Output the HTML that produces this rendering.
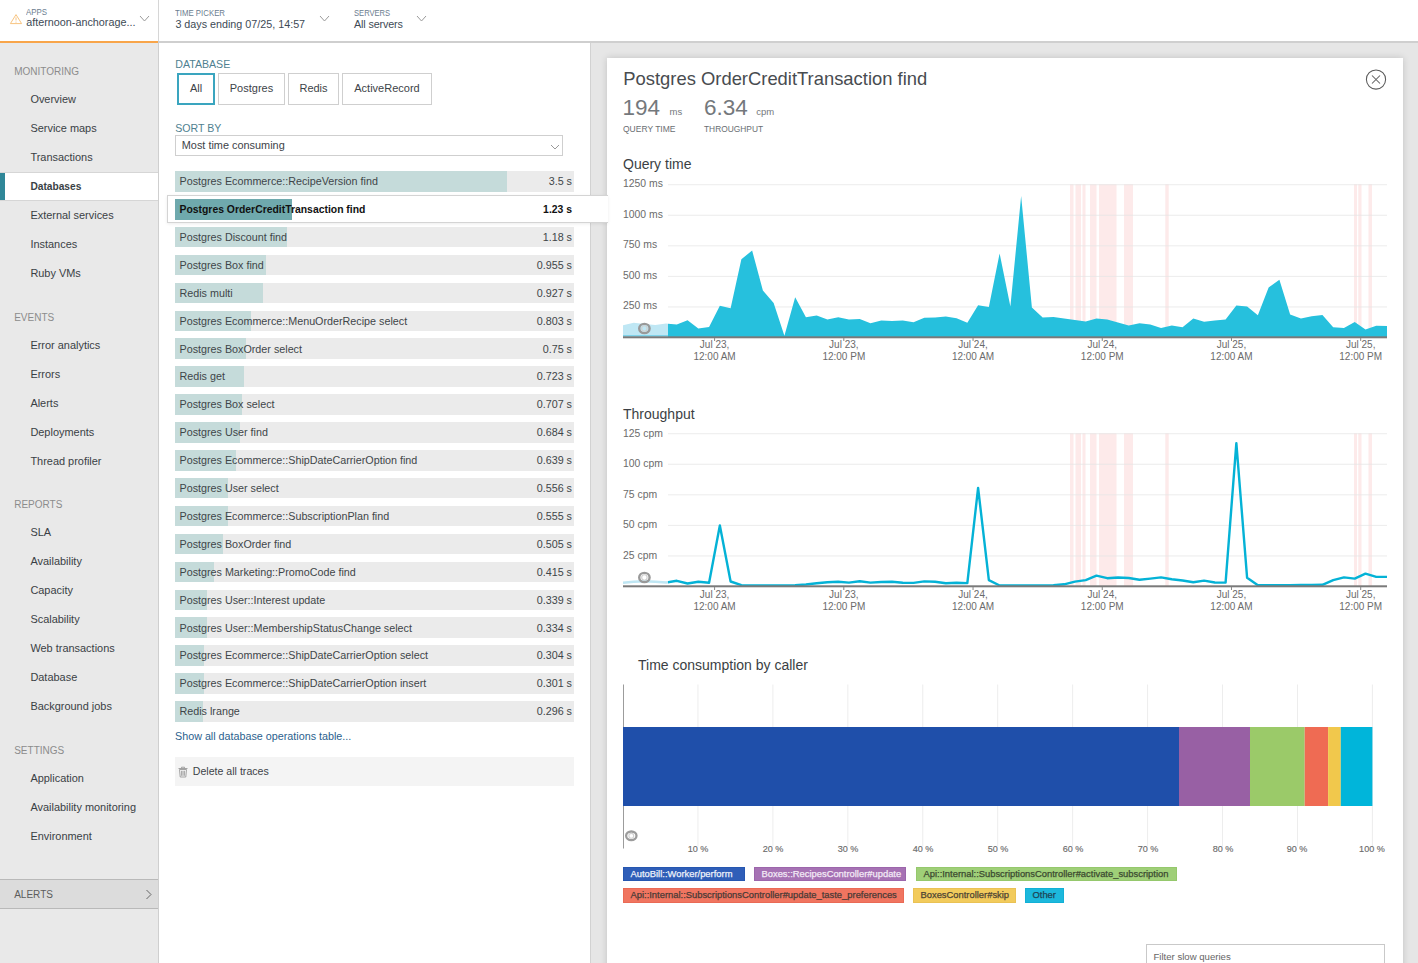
<!DOCTYPE html>
<html><head><meta charset="utf-8"><title>Databases</title>
<style>
html,body{margin:0;padding:0;width:1418px;height:963px;overflow:hidden;background:#fff;}
body{position:relative;font-family:"Liberation Sans", sans-serif;}
.t{position:absolute;line-height:1;white-space:nowrap;font-family:"Liberation Sans", sans-serif;}
.r{position:absolute;display:block;}
</style></head><body>
<div class="r" style="left:0px;top:0px;width:1418px;height:41px;background:#fff;"></div>
<div class="r" style="left:0px;top:41px;width:158px;height:2px;background:#f8a54a;"></div>
<div class="r" style="left:158px;top:41px;width:1260px;height:2px;background:#cfcfcf;"></div>
<div class="r" style="left:158px;top:0px;width:1px;height:41px;background:#d6d6d6;"></div>
<div class="r" style="left:0px;top:43px;width:158px;height:920px;background:#e9e9e9;"></div>
<div class="r" style="left:158px;top:43px;width:1px;height:920px;background:#cfcfcf;"></div>
<div class="r" style="left:159px;top:43px;width:431px;height:920px;background:#fff;"></div>
<div class="r" style="left:590px;top:43px;width:828px;height:920px;background:#e6e6e6;"></div>
<div class="r" style="left:590px;top:43px;width:1px;height:920px;background:#d2d2d2;"></div>
<div class="r" style="left:591px;top:43px;width:827px;height:920px;overflow:hidden;"><div class="r" style="left:16px;top:15px;width:796px;height:940px;background:#fff;box-shadow:0 0 7px rgba(0,0,0,0.16);"></div></div>
<svg class="r" style="left:9px;top:13px" width="14" height="12" viewBox="0 0 14 12"><path d="M7 1.6 L12.6 10.6 L1.4 10.6 Z" fill="none" stroke="#f8c480" stroke-width="1" stroke-linejoin="round"/><path d="M7 4.4 V7.5" stroke="#f8c480" stroke-width="1"/><circle cx="7" cy="9.1" r="0.55" fill="#f8c480"/></svg>
<div class="t" style="left:26.20px;top:8.08px;font-size:9.2px;color:#6b7d8f;transform:scaleX(0.86);transform-origin:0 0;">APPS</div>
<div class="t" style="left:26.20px;top:16.52px;font-size:10.8px;color:#3d4a55;">afternoon-anchorage...</div>
<svg class="r" style="left:139px;top:15px" width="11" height="7" viewBox="0 0 11 7"><path d="M1 1 L5.5 6 L10 1" fill="none" stroke="#9a9a9a" stroke-width="1"/></svg>
<div class="t" style="left:175.40px;top:7.91px;font-size:9.4px;color:#6b7d8f;transform:scaleX(0.835);transform-origin:0 0;">TIME PICKER</div>
<div class="t" style="left:175.40px;top:19.06px;font-size:10.75px;color:#3d4a55;">3 days ending 07/25, 14:57</div>
<svg class="r" style="left:319px;top:15px" width="11" height="7" viewBox="0 0 11 7"><path d="M1 1 L5.5 6 L10 1" fill="none" stroke="#9a9a9a" stroke-width="1"/></svg>
<div class="t" style="left:354.10px;top:7.91px;font-size:9.4px;color:#6b7d8f;transform:scaleX(0.81);transform-origin:0 0;">SERVERS</div>
<div class="t" style="left:354.10px;top:19.06px;font-size:10.75px;color:#3d4a55;letter-spacing:-0.15px;">All servers</div>
<svg class="r" style="left:415.5px;top:15px" width="11" height="7" viewBox="0 0 11 7"><path d="M1 1 L5.5 6 L10 1" fill="none" stroke="#9a9a9a" stroke-width="1"/></svg>
<div class="r" style="left:0px;top:172px;width:158px;height:1px;background:#d6d6d6;"></div>
<div class="r" style="left:0px;top:173px;width:158px;height:27px;background:#fff;"></div>
<div class="r" style="left:0px;top:200px;width:158px;height:1px;background:#d6d6d6;"></div>
<div class="r" style="left:0px;top:173px;width:5px;height:27px;background:#2f8798;"></div>
<div class="t" style="left:14.20px;top:66.50px;font-size:10.0px;color:#8c8c8c;">MONITORING</div>
<div class="t" style="left:30.40px;top:93.69px;font-size:10.95px;color:#3a3f45;">Overview</div>
<div class="t" style="left:30.40px;top:122.69px;font-size:10.95px;color:#3a3f45;">Service maps</div>
<div class="t" style="left:30.40px;top:151.69px;font-size:10.95px;color:#3a3f45;">Transactions</div>
<div class="t" style="left:30.40px;top:182.13px;font-size:10.2px;color:#3a3f45;font-weight:bold;">Databases</div>
<div class="t" style="left:30.40px;top:210.09px;font-size:10.95px;color:#3a3f45;">External services</div>
<div class="t" style="left:30.40px;top:238.89px;font-size:10.95px;color:#3a3f45;">Instances</div>
<div class="t" style="left:30.40px;top:267.69px;font-size:10.95px;color:#3a3f45;">Ruby VMs</div>
<div class="t" style="left:14.20px;top:312.50px;font-size:10.0px;color:#8c8c8c;">EVENTS</div>
<div class="t" style="left:30.40px;top:339.69px;font-size:10.95px;color:#3a3f45;">Error analytics</div>
<div class="t" style="left:30.40px;top:368.69px;font-size:10.95px;color:#3a3f45;">Errors</div>
<div class="t" style="left:30.40px;top:397.69px;font-size:10.95px;color:#3a3f45;">Alerts</div>
<div class="t" style="left:30.40px;top:426.69px;font-size:10.95px;color:#3a3f45;">Deployments</div>
<div class="t" style="left:30.40px;top:455.69px;font-size:10.95px;color:#3a3f45;">Thread profiler</div>
<div class="t" style="left:14.20px;top:499.50px;font-size:10.0px;color:#8c8c8c;">REPORTS</div>
<div class="t" style="left:30.40px;top:526.69px;font-size:10.95px;color:#3a3f45;">SLA</div>
<div class="t" style="left:30.40px;top:555.69px;font-size:10.95px;color:#3a3f45;">Availability</div>
<div class="t" style="left:30.40px;top:584.69px;font-size:10.95px;color:#3a3f45;">Capacity</div>
<div class="t" style="left:30.40px;top:613.69px;font-size:10.95px;color:#3a3f45;">Scalability</div>
<div class="t" style="left:30.40px;top:642.69px;font-size:10.95px;color:#3a3f45;">Web transactions</div>
<div class="t" style="left:30.40px;top:671.69px;font-size:10.95px;color:#3a3f45;">Database</div>
<div class="t" style="left:30.40px;top:700.69px;font-size:10.95px;color:#3a3f45;">Background jobs</div>
<div class="t" style="left:14.20px;top:745.50px;font-size:10.0px;color:#8c8c8c;">SETTINGS</div>
<div class="t" style="left:30.40px;top:772.99px;font-size:10.95px;color:#3a3f45;">Application</div>
<div class="t" style="left:30.40px;top:801.69px;font-size:10.95px;color:#3a3f45;">Availability monitoring</div>
<div class="t" style="left:30.40px;top:830.69px;font-size:10.95px;color:#3a3f45;">Environment</div>
<div class="r" style="left:0px;top:879px;width:158px;height:1px;background:#b9b9b9;"></div>
<div class="r" style="left:0px;top:880px;width:158px;height:28px;background:#dcdcdc;"></div>
<div class="r" style="left:0px;top:908px;width:158px;height:1px;background:#b9b9b9;"></div>
<div class="t" style="left:14.20px;top:889.50px;font-size:10.0px;color:#5d5d5d;">ALERTS</div>
<svg class="r" style="left:145px;top:889px" width="8" height="11" viewBox="0 0 8 11"><path d="M1.5 1 L6 5.5 L1.5 10" fill="none" stroke="#666" stroke-width="1"/></svg>
<div class="t" style="left:175.30px;top:59.19px;font-size:10.6px;color:#4f7f90;">DATABASE</div>
<div class="r" style="left:177px;top:73px;width:34px;height:28px;border:2px solid #3aa5bf;background:#fff"></div>
<div class="t" style="left:96.00px;width:200px;text-align:center;top:83.15px;font-size:11px;color:#3d4348;">All</div>
<div class="r" style="left:218px;top:73px;width:65px;height:30px;border:1px solid #cfcfcf;background:#fff"></div>
<div class="t" style="left:151.50px;width:200px;text-align:center;top:83.15px;font-size:11px;color:#3d4348;">Postgres</div>
<div class="r" style="left:288px;top:73px;width:49px;height:30px;border:1px solid #cfcfcf;background:#fff"></div>
<div class="t" style="left:213.50px;width:200px;text-align:center;top:83.15px;font-size:11px;color:#3d4348;">Redis</div>
<div class="r" style="left:342px;top:73px;width:88px;height:30px;border:1px solid #cfcfcf;background:#fff"></div>
<div class="t" style="left:287.00px;width:200px;text-align:center;top:83.15px;font-size:11px;color:#3d4348;">ActiveRecord</div>
<div class="t" style="left:175.30px;top:122.99px;font-size:10.6px;color:#4f7f90;">SORT BY</div>
<div class="r" style="left:175px;top:135px;width:386px;height:19px;border:1px solid #cfcfcf;background:#fff"></div>
<div class="t" style="left:181.80px;top:139.83px;font-size:10.9px;color:#3d4348;">Most time consuming</div>
<svg class="r" style="left:549.5px;top:143.5px" width="10" height="6" viewBox="0 0 10 6"><path d="M1 1 L5.0 5 L9 1" fill="none" stroke="#999" stroke-width="1"/></svg>
<div class="r" style="left:175px;top:171.0px;width:399px;height:20.5px;background:#ebebeb"></div>
<div class="r" style="left:175px;top:171.0px;width:332.0px;height:20.5px;background:#c5dbda"></div>
<div class="t" style="left:179.50px;top:176.16px;font-size:10.75px;color:#3f4649;">Postgres Ecommerce::RecipeVersion find</div>
<div class="t" style="left:172.00px;width:400px;text-align:right;top:176.16px;font-size:10.75px;color:#3f4649;">3.5 s</div>
<div class="r" style="left:167px;top:195px;width:440px;height:26px;border:1px solid #d4d4d4;border-right:none;background:#fff;box-shadow:0 1px 3px rgba(0,0,0,0.08)"></div>
<div class="r" style="left:175px;top:199px;width:117px;height:21px;background:#6fa9ad;"></div>
<div class="t" style="left:179.50px;top:205.16px;font-size:10.4px;color:#111;font-weight:bold;">Postgres OrderCreditTransaction find</div>
<div class="t" style="left:172.00px;width:400px;text-align:right;top:205.16px;font-size:10.4px;color:#111;font-weight:bold;">1.23 s</div>
<div class="r" style="left:175px;top:226.8px;width:399px;height:20.5px;background:#ebebeb"></div>
<div class="r" style="left:175px;top:226.8px;width:111.9px;height:20.5px;background:#c5dbda"></div>
<div class="t" style="left:179.50px;top:231.96px;font-size:10.75px;color:#3f4649;">Postgres Discount find</div>
<div class="t" style="left:172.00px;width:400px;text-align:right;top:231.96px;font-size:10.75px;color:#3f4649;">1.18 s</div>
<div class="r" style="left:175px;top:254.7px;width:399px;height:20.5px;background:#ebebeb"></div>
<div class="r" style="left:175px;top:254.7px;width:90.6px;height:20.5px;background:#c5dbda"></div>
<div class="t" style="left:179.50px;top:259.86px;font-size:10.75px;color:#3f4649;">Postgres Box find</div>
<div class="t" style="left:172.00px;width:400px;text-align:right;top:259.86px;font-size:10.75px;color:#3f4649;">0.955 s</div>
<div class="r" style="left:175px;top:282.6px;width:399px;height:20.5px;background:#ebebeb"></div>
<div class="r" style="left:175px;top:282.6px;width:87.9px;height:20.5px;background:#c5dbda"></div>
<div class="t" style="left:179.50px;top:287.76px;font-size:10.75px;color:#3f4649;">Redis multi</div>
<div class="t" style="left:172.00px;width:400px;text-align:right;top:287.76px;font-size:10.75px;color:#3f4649;">0.927 s</div>
<div class="r" style="left:175px;top:310.5px;width:399px;height:20.5px;background:#ebebeb"></div>
<div class="r" style="left:175px;top:310.5px;width:76.2px;height:20.5px;background:#c5dbda"></div>
<div class="t" style="left:179.50px;top:315.66px;font-size:10.75px;color:#3f4649;">Postgres Ecommerce::MenuOrderRecipe select</div>
<div class="t" style="left:172.00px;width:400px;text-align:right;top:315.66px;font-size:10.75px;color:#3f4649;">0.803 s</div>
<div class="r" style="left:175px;top:338.4px;width:399px;height:20.5px;background:#ebebeb"></div>
<div class="r" style="left:175px;top:338.4px;width:71.1px;height:20.5px;background:#c5dbda"></div>
<div class="t" style="left:179.50px;top:343.56px;font-size:10.75px;color:#3f4649;">Postgres BoxOrder select</div>
<div class="t" style="left:172.00px;width:400px;text-align:right;top:343.56px;font-size:10.75px;color:#3f4649;">0.75 s</div>
<div class="r" style="left:175px;top:366.3px;width:399px;height:20.5px;background:#ebebeb"></div>
<div class="r" style="left:175px;top:366.3px;width:68.6px;height:20.5px;background:#c5dbda"></div>
<div class="t" style="left:179.50px;top:371.46px;font-size:10.75px;color:#3f4649;">Redis get</div>
<div class="t" style="left:172.00px;width:400px;text-align:right;top:371.46px;font-size:10.75px;color:#3f4649;">0.723 s</div>
<div class="r" style="left:175px;top:394.2px;width:399px;height:20.5px;background:#ebebeb"></div>
<div class="r" style="left:175px;top:394.2px;width:67.1px;height:20.5px;background:#c5dbda"></div>
<div class="t" style="left:179.50px;top:399.36px;font-size:10.75px;color:#3f4649;">Postgres Box select</div>
<div class="t" style="left:172.00px;width:400px;text-align:right;top:399.36px;font-size:10.75px;color:#3f4649;">0.707 s</div>
<div class="r" style="left:175px;top:422.1px;width:399px;height:20.5px;background:#ebebeb"></div>
<div class="r" style="left:175px;top:422.1px;width:64.9px;height:20.5px;background:#c5dbda"></div>
<div class="t" style="left:179.50px;top:427.26px;font-size:10.75px;color:#3f4649;">Postgres User find</div>
<div class="t" style="left:172.00px;width:400px;text-align:right;top:427.26px;font-size:10.75px;color:#3f4649;">0.684 s</div>
<div class="r" style="left:175px;top:450.0px;width:399px;height:20.5px;background:#ebebeb"></div>
<div class="r" style="left:175px;top:450.0px;width:60.6px;height:20.5px;background:#c5dbda"></div>
<div class="t" style="left:179.50px;top:455.16px;font-size:10.75px;color:#3f4649;">Postgres Ecommerce::ShipDateCarrierOption find</div>
<div class="t" style="left:172.00px;width:400px;text-align:right;top:455.16px;font-size:10.75px;color:#3f4649;">0.639 s</div>
<div class="r" style="left:175px;top:477.9px;width:399px;height:20.5px;background:#ebebeb"></div>
<div class="r" style="left:175px;top:477.9px;width:52.7px;height:20.5px;background:#c5dbda"></div>
<div class="t" style="left:179.50px;top:483.06px;font-size:10.75px;color:#3f4649;">Postgres User select</div>
<div class="t" style="left:172.00px;width:400px;text-align:right;top:483.06px;font-size:10.75px;color:#3f4649;">0.556 s</div>
<div class="r" style="left:175px;top:505.8px;width:399px;height:20.5px;background:#ebebeb"></div>
<div class="r" style="left:175px;top:505.8px;width:52.6px;height:20.5px;background:#c5dbda"></div>
<div class="t" style="left:179.50px;top:510.96px;font-size:10.75px;color:#3f4649;">Postgres Ecommerce::SubscriptionPlan find</div>
<div class="t" style="left:172.00px;width:400px;text-align:right;top:510.96px;font-size:10.75px;color:#3f4649;">0.555 s</div>
<div class="r" style="left:175px;top:533.7px;width:399px;height:20.5px;background:#ebebeb"></div>
<div class="r" style="left:175px;top:533.7px;width:47.9px;height:20.5px;background:#c5dbda"></div>
<div class="t" style="left:179.50px;top:538.86px;font-size:10.75px;color:#3f4649;">Postgres BoxOrder find</div>
<div class="t" style="left:172.00px;width:400px;text-align:right;top:538.86px;font-size:10.75px;color:#3f4649;">0.505 s</div>
<div class="r" style="left:175px;top:561.6px;width:399px;height:20.5px;background:#ebebeb"></div>
<div class="r" style="left:175px;top:561.6px;width:39.4px;height:20.5px;background:#c5dbda"></div>
<div class="t" style="left:179.50px;top:566.76px;font-size:10.75px;color:#3f4649;">Postgres Marketing::PromoCode find</div>
<div class="t" style="left:172.00px;width:400px;text-align:right;top:566.76px;font-size:10.75px;color:#3f4649;">0.415 s</div>
<div class="r" style="left:175px;top:589.5px;width:399px;height:20.5px;background:#ebebeb"></div>
<div class="r" style="left:175px;top:589.5px;width:32.2px;height:20.5px;background:#c5dbda"></div>
<div class="t" style="left:179.50px;top:594.66px;font-size:10.75px;color:#3f4649;">Postgres User::Interest update</div>
<div class="t" style="left:172.00px;width:400px;text-align:right;top:594.66px;font-size:10.75px;color:#3f4649;">0.339 s</div>
<div class="r" style="left:175px;top:617.4px;width:399px;height:20.5px;background:#ebebeb"></div>
<div class="r" style="left:175px;top:617.4px;width:31.7px;height:20.5px;background:#c5dbda"></div>
<div class="t" style="left:179.50px;top:622.56px;font-size:10.75px;color:#3f4649;">Postgres User::MembershipStatusChange select</div>
<div class="t" style="left:172.00px;width:400px;text-align:right;top:622.56px;font-size:10.75px;color:#3f4649;">0.334 s</div>
<div class="r" style="left:175px;top:645.3px;width:399px;height:20.5px;background:#ebebeb"></div>
<div class="r" style="left:175px;top:645.3px;width:28.8px;height:20.5px;background:#c5dbda"></div>
<div class="t" style="left:179.50px;top:650.46px;font-size:10.75px;color:#3f4649;">Postgres Ecommerce::ShipDateCarrierOption select</div>
<div class="t" style="left:172.00px;width:400px;text-align:right;top:650.46px;font-size:10.75px;color:#3f4649;">0.304 s</div>
<div class="r" style="left:175px;top:673.2px;width:399px;height:20.5px;background:#ebebeb"></div>
<div class="r" style="left:175px;top:673.2px;width:28.6px;height:20.5px;background:#c5dbda"></div>
<div class="t" style="left:179.50px;top:678.36px;font-size:10.75px;color:#3f4649;">Postgres Ecommerce::ShipDateCarrierOption insert</div>
<div class="t" style="left:172.00px;width:400px;text-align:right;top:678.36px;font-size:10.75px;color:#3f4649;">0.301 s</div>
<div class="r" style="left:175px;top:701.1px;width:399px;height:20.5px;background:#ebebeb"></div>
<div class="r" style="left:175px;top:701.1px;width:28.1px;height:20.5px;background:#c5dbda"></div>
<div class="t" style="left:179.50px;top:706.26px;font-size:10.75px;color:#3f4649;">Redis lrange</div>
<div class="t" style="left:172.00px;width:400px;text-align:right;top:706.26px;font-size:10.75px;color:#3f4649;">0.296 s</div>
<div class="t" style="left:175.00px;top:730.56px;font-size:10.75px;color:#2b5f8e;">Show all database operations table...</div>
<div class="r" style="left:175px;top:757px;width:399px;height:29px;background:#f4f4f4;"></div>
<svg class="r" style="left:177px;top:766px" width="12" height="12" viewBox="0 0 12 12"><path d="M1.5 2.5 H10.5 M4.5 2.5 V1.2 H7.5 V2.5 M2.5 3.5 L3.2 11 H8.8 L9.5 3.5 Z M4.6 4.8 V9.8 M6 4.8 V9.8 M7.4 4.8 V9.8" fill="none" stroke="#9a9a9a" stroke-width="0.9"/></svg>
<div class="t" style="left:192.80px;top:765.69px;font-size:10.6px;color:#3d4348;">Delete all traces</div>
<div class="t" style="left:623.30px;top:70.06px;font-size:18.4px;color:#484c50;">Postgres OrderCreditTransaction find</div>
<div class="t" style="left:622.50px;top:96.67px;font-size:22.5px;color:#74787c;">194</div>
<div class="t" style="left:669.50px;top:107.12px;font-size:9.5px;color:#74787c;">ms</div>
<div class="t" style="left:704.00px;top:96.67px;font-size:22.5px;color:#74787c;">6.34</div>
<div class="t" style="left:756.30px;top:107.12px;font-size:9.5px;color:#74787c;">cpm</div>
<div class="t" style="left:623.00px;top:124.78px;font-size:8.5px;color:#6a6e72;">QUERY TIME</div>
<div class="t" style="left:704.00px;top:124.86px;font-size:8.4px;color:#6a6e72;">THROUGHPUT</div>
<svg class="r" style="left:1364px;top:68px" width="24" height="24" viewBox="0 0 24 24"><circle cx="12" cy="11.5" r="9.6" fill="none" stroke="#5a5a5a" stroke-width="1.05"/><path d="M8 7.5 L16 15.5 M16 7.5 L8 15.5" stroke="#5a5a5a" stroke-width="1.05"/></svg>
<div class="t" style="left:623.00px;top:157.40px;font-size:14px;color:#3b3f44;">Query time</div>
<svg class="r" style="left:607px;top:176.7px" width="796" height="200" viewBox="607 176.7 796 200">
<rect x="1070" y="183.9" width="3.5" height="152.8" fill="#fdeaea"/>
<rect x="1075.5" y="183.9" width="5.5" height="152.8" fill="#fdeaea"/>
<rect x="1082.5" y="183.9" width="3.0" height="152.8" fill="#fdeaea"/>
<rect x="1090" y="183.9" width="6.5" height="152.8" fill="#fdeaea"/>
<rect x="1099" y="183.9" width="17.5" height="152.8" fill="#fdeaea"/>
<rect x="1124" y="183.9" width="9" height="152.8" fill="#fdeaea"/>
<rect x="1165.3" y="183.9" width="3.400000000000091" height="152.8" fill="#fdeaea"/>
<rect x="1354" y="183.9" width="3" height="152.8" fill="#fdeaea"/>
<rect x="1358.3" y="183.9" width="3.2000000000000455" height="152.8" fill="#fdeaea"/>
<rect x="1368.5" y="183.9" width="3.5" height="152.8" fill="#fdeaea"/>
<rect x="668" y="306.14" width="719" height="1" fill="#e6e6e6" fill-opacity="0.75"/>
<rect x="668" y="275.58" width="719" height="1" fill="#e6e6e6" fill-opacity="0.75"/>
<rect x="668" y="245.02" width="719" height="1" fill="#e6e6e6" fill-opacity="0.75"/>
<rect x="668" y="214.46" width="719" height="1" fill="#e6e6e6" fill-opacity="0.75"/>
<rect x="668" y="183.90" width="719" height="1" fill="#e6e6e6" fill-opacity="0.75"/>
<clipPath id="cl"><rect x="623" y="176.7" width="45" height="200"/></clipPath>
<clipPath id="cr"><rect x="668" y="176.7" width="720" height="200"/></clipPath>
<polygon points="623,336.7 623.00,325.00 633.76,322.40 644.52,323.80 655.28,324.70 666.04,323.20 676.80,324.10 687.56,320.00 698.32,328.30 709.08,326.70 719.85,305.40 730.61,308.00 741.37,259.00 752.13,250.20 762.89,290.10 773.65,302.60 784.41,335.50 795.17,296.90 805.93,317.00 816.69,315.10 827.45,319.30 838.21,317.00 848.97,319.30 859.73,318.80 870.49,323.00 881.25,320.20 892.01,320.60 902.77,320.20 913.54,321.90 924.30,317.40 935.06,317.30 945.82,316.30 956.58,318.00 967.34,322.40 978.10,305.00 988.86,306.60 999.62,253.10 1010.38,306.30 1021.14,195.80 1031.90,307.10 1042.66,317.10 1053.42,316.60 1064.18,318.30 1074.94,319.60 1085.70,321.30 1096.46,318.30 1107.23,319.10 1117.99,322.10 1128.75,325.10 1139.51,323.00 1150.27,324.30 1161.03,327.70 1171.79,325.20 1182.55,326.90 1193.31,318.10 1204.07,321.40 1214.83,320.10 1225.59,319.20 1236.35,305.30 1247.11,306.10 1257.87,315.00 1268.63,287.10 1279.39,279.50 1290.15,314.20 1300.92,318.20 1311.68,315.90 1322.44,314.60 1333.20,327.00 1343.96,327.70 1354.72,321.80 1365.48,329.30 1376.24,325.40 1387.00,325.80 1387,336.7" fill="#bfe7f4" clip-path="url(#cl)"/>
<polygon points="623,336.7 623.00,325.00 633.76,322.40 644.52,323.80 655.28,324.70 666.04,323.20 676.80,324.10 687.56,320.00 698.32,328.30 709.08,326.70 719.85,305.40 730.61,308.00 741.37,259.00 752.13,250.20 762.89,290.10 773.65,302.60 784.41,335.50 795.17,296.90 805.93,317.00 816.69,315.10 827.45,319.30 838.21,317.00 848.97,319.30 859.73,318.80 870.49,323.00 881.25,320.20 892.01,320.60 902.77,320.20 913.54,321.90 924.30,317.40 935.06,317.30 945.82,316.30 956.58,318.00 967.34,322.40 978.10,305.00 988.86,306.60 999.62,253.10 1010.38,306.30 1021.14,195.80 1031.90,307.10 1042.66,317.10 1053.42,316.60 1064.18,318.30 1074.94,319.60 1085.70,321.30 1096.46,318.30 1107.23,319.10 1117.99,322.10 1128.75,325.10 1139.51,323.00 1150.27,324.30 1161.03,327.70 1171.79,325.20 1182.55,326.90 1193.31,318.10 1204.07,321.40 1214.83,320.10 1225.59,319.20 1236.35,305.30 1247.11,306.10 1257.87,315.00 1268.63,287.10 1279.39,279.50 1290.15,314.20 1300.92,318.20 1311.68,315.90 1322.44,314.60 1333.20,327.00 1343.96,327.70 1354.72,321.80 1365.48,329.30 1376.24,325.40 1387.00,325.80 1387,336.7" fill="#26c0dd" clip-path="url(#cr)"/>
<rect x="623" y="334.7" width="45" height="1.5" fill="#7fd3ea"/>
<rect x="623" y="336.00" width="764" height="2" fill="#7a7a7a"/>
<rect x="714.10" y="337.70" width="1" height="3" fill="#888"/>
<rect x="843.32" y="337.70" width="1" height="3" fill="#888"/>
<rect x="972.54" y="337.70" width="1" height="3" fill="#888"/>
<rect x="1101.76" y="337.70" width="1" height="3" fill="#888"/>
<rect x="1230.98" y="337.70" width="1" height="3" fill="#888"/>
<rect x="1360.20" y="337.70" width="1" height="3" fill="#888"/>
<ellipse cx="644.4" cy="328.20" rx="5.2" ry="4.6" fill="none" stroke="#999" stroke-width="2.4"/>
<circle cx="644.4" cy="328.20" r="2.7" fill="none" stroke="#cfcfcf" stroke-width="1.1"/>
</svg>
<div class="t" style="left:623.00px;top:301.20px;font-size:10.4px;color:#6b6b6b;">250 ms</div>
<div class="t" style="left:623.00px;top:270.64px;font-size:10.4px;color:#6b6b6b;">500 ms</div>
<div class="t" style="left:623.00px;top:240.08px;font-size:10.4px;color:#6b6b6b;">750 ms</div>
<div class="t" style="left:623.00px;top:209.52px;font-size:10.4px;color:#6b6b6b;">1000 ms</div>
<div class="t" style="left:623.00px;top:178.96px;font-size:10.4px;color:#6b6b6b;">1250 ms</div>
<div class="t" style="left:614.60px;width:200px;text-align:center;top:340.20px;font-size:10.0px;color:#6b6b6b;">Jul 23,</div>
<div class="t" style="left:614.60px;width:200px;text-align:center;top:351.90px;font-size:10.0px;color:#6b6b6b;">12:00 AM</div>
<div class="t" style="left:743.82px;width:200px;text-align:center;top:340.20px;font-size:10.0px;color:#6b6b6b;">Jul 23,</div>
<div class="t" style="left:743.82px;width:200px;text-align:center;top:351.90px;font-size:10.0px;color:#6b6b6b;">12:00 PM</div>
<div class="t" style="left:873.04px;width:200px;text-align:center;top:340.20px;font-size:10.0px;color:#6b6b6b;">Jul 24,</div>
<div class="t" style="left:873.04px;width:200px;text-align:center;top:351.90px;font-size:10.0px;color:#6b6b6b;">12:00 AM</div>
<div class="t" style="left:1002.26px;width:200px;text-align:center;top:340.20px;font-size:10.0px;color:#6b6b6b;">Jul 24,</div>
<div class="t" style="left:1002.26px;width:200px;text-align:center;top:351.90px;font-size:10.0px;color:#6b6b6b;">12:00 PM</div>
<div class="t" style="left:1131.48px;width:200px;text-align:center;top:340.20px;font-size:10.0px;color:#6b6b6b;">Jul 25,</div>
<div class="t" style="left:1131.48px;width:200px;text-align:center;top:351.90px;font-size:10.0px;color:#6b6b6b;">12:00 AM</div>
<div class="t" style="left:1260.70px;width:200px;text-align:center;top:340.20px;font-size:10.0px;color:#6b6b6b;">Jul 25,</div>
<div class="t" style="left:1260.70px;width:200px;text-align:center;top:351.90px;font-size:10.0px;color:#6b6b6b;">12:00 PM</div>
<div class="t" style="left:623.00px;top:406.80px;font-size:14px;color:#3b3f44;">Throughput</div>
<svg class="r" style="left:607px;top:426.29999999999995px" width="796" height="200" viewBox="607 426.29999999999995 796 200">
<rect x="1070" y="433.5" width="3.5" height="152.8" fill="#fdeaea"/>
<rect x="1075.5" y="433.5" width="5.5" height="152.8" fill="#fdeaea"/>
<rect x="1082.5" y="433.5" width="3.0" height="152.8" fill="#fdeaea"/>
<rect x="1090" y="433.5" width="6.5" height="152.8" fill="#fdeaea"/>
<rect x="1099" y="433.5" width="17.5" height="152.8" fill="#fdeaea"/>
<rect x="1124" y="433.5" width="9" height="152.8" fill="#fdeaea"/>
<rect x="1165.3" y="433.5" width="3.400000000000091" height="152.8" fill="#fdeaea"/>
<rect x="1354" y="433.5" width="3" height="152.8" fill="#fdeaea"/>
<rect x="1358.3" y="433.5" width="3.2000000000000455" height="152.8" fill="#fdeaea"/>
<rect x="1368.5" y="433.5" width="3.5" height="152.8" fill="#fdeaea"/>
<rect x="668" y="555.74" width="719" height="1" fill="#e6e6e6" fill-opacity="0.75"/>
<rect x="668" y="525.18" width="719" height="1" fill="#e6e6e6" fill-opacity="0.75"/>
<rect x="668" y="494.62" width="719" height="1" fill="#e6e6e6" fill-opacity="0.75"/>
<rect x="668" y="464.06" width="719" height="1" fill="#e6e6e6" fill-opacity="0.75"/>
<rect x="668" y="433.50" width="719" height="1" fill="#e6e6e6" fill-opacity="0.75"/>
<clipPath id="ll"><rect x="623" y="426.29999999999995" width="45" height="200"/></clipPath>
<clipPath id="lr"><rect x="668" y="426.29999999999995" width="720" height="200"/></clipPath>
<polyline points="623.00,583.00 633.76,582.00 644.52,581.50 655.28,582.00 666.04,582.80 676.80,581.10 687.56,583.80 698.32,582.00 709.08,583.00 719.85,525.80 730.61,581.80 741.37,585.50 752.13,585.70 762.89,585.80 773.65,585.80 784.41,585.80 795.17,585.60 805.93,584.80 816.69,583.60 827.45,582.50 838.21,582.10 848.97,582.90 859.73,581.60 870.49,582.90 881.25,582.30 892.01,582.00 902.77,583.00 913.54,583.20 924.30,581.70 935.06,582.00 945.82,583.60 956.58,583.00 967.34,583.40 978.10,488.20 988.86,580.40 999.62,585.80 1010.38,585.80 1021.14,585.80 1031.90,585.80 1042.66,585.70 1053.42,585.50 1064.18,584.60 1074.94,581.90 1085.70,580.40 1096.46,576.00 1107.23,578.50 1117.99,577.80 1128.75,578.30 1139.51,580.00 1150.27,578.90 1161.03,577.70 1171.79,579.50 1182.55,580.80 1193.31,582.50 1204.07,580.90 1214.83,582.80 1225.59,582.90 1236.35,443.40 1247.11,578.10 1257.87,585.50 1268.63,585.50 1279.39,585.50 1290.15,585.40 1300.92,585.30 1311.68,585.20 1322.44,585.10 1333.20,580.40 1343.96,577.70 1354.72,578.90 1365.48,574.00 1376.24,577.20 1387.00,577.20" fill="none" stroke="#bfe6f3" stroke-width="2.4" stroke-linejoin="round" clip-path="url(#ll)"/>
<polyline points="623.00,583.00 633.76,582.00 644.52,581.50 655.28,582.00 666.04,582.80 676.80,581.10 687.56,583.80 698.32,582.00 709.08,583.00 719.85,525.80 730.61,581.80 741.37,585.50 752.13,585.70 762.89,585.80 773.65,585.80 784.41,585.80 795.17,585.60 805.93,584.80 816.69,583.60 827.45,582.50 838.21,582.10 848.97,582.90 859.73,581.60 870.49,582.90 881.25,582.30 892.01,582.00 902.77,583.00 913.54,583.20 924.30,581.70 935.06,582.00 945.82,583.60 956.58,583.00 967.34,583.40 978.10,488.20 988.86,580.40 999.62,585.80 1010.38,585.80 1021.14,585.80 1031.90,585.80 1042.66,585.70 1053.42,585.50 1064.18,584.60 1074.94,581.90 1085.70,580.40 1096.46,576.00 1107.23,578.50 1117.99,577.80 1128.75,578.30 1139.51,580.00 1150.27,578.90 1161.03,577.70 1171.79,579.50 1182.55,580.80 1193.31,582.50 1204.07,580.90 1214.83,582.80 1225.59,582.90 1236.35,443.40 1247.11,578.10 1257.87,585.50 1268.63,585.50 1279.39,585.50 1290.15,585.40 1300.92,585.30 1311.68,585.20 1322.44,585.10 1333.20,580.40 1343.96,577.70 1354.72,578.90 1365.48,574.00 1376.24,577.20 1387.00,577.20" fill="none" stroke="#04b2d6" stroke-width="2.4" stroke-linejoin="round" clip-path="url(#lr)"/>
<rect x="623" y="585.60" width="764" height="2" fill="#7a7a7a"/>
<rect x="714.10" y="587.30" width="1" height="3" fill="#888"/>
<rect x="843.32" y="587.30" width="1" height="3" fill="#888"/>
<rect x="972.54" y="587.30" width="1" height="3" fill="#888"/>
<rect x="1101.76" y="587.30" width="1" height="3" fill="#888"/>
<rect x="1230.98" y="587.30" width="1" height="3" fill="#888"/>
<rect x="1360.20" y="587.30" width="1" height="3" fill="#888"/>
<ellipse cx="644.4" cy="577.80" rx="5.2" ry="4.6" fill="none" stroke="#999" stroke-width="2.4"/>
<circle cx="644.4" cy="577.80" r="2.7" fill="none" stroke="#cfcfcf" stroke-width="1.1"/>
</svg>
<div class="t" style="left:623.00px;top:550.80px;font-size:10.4px;color:#6b6b6b;">25 cpm</div>
<div class="t" style="left:623.00px;top:520.24px;font-size:10.4px;color:#6b6b6b;">50 cpm</div>
<div class="t" style="left:623.00px;top:489.68px;font-size:10.4px;color:#6b6b6b;">75 cpm</div>
<div class="t" style="left:623.00px;top:459.12px;font-size:10.4px;color:#6b6b6b;">100 cpm</div>
<div class="t" style="left:623.00px;top:428.56px;font-size:10.4px;color:#6b6b6b;">125 cpm</div>
<div class="t" style="left:614.60px;width:200px;text-align:center;top:589.80px;font-size:10.0px;color:#6b6b6b;">Jul 23,</div>
<div class="t" style="left:614.60px;width:200px;text-align:center;top:601.50px;font-size:10.0px;color:#6b6b6b;">12:00 AM</div>
<div class="t" style="left:743.82px;width:200px;text-align:center;top:589.80px;font-size:10.0px;color:#6b6b6b;">Jul 23,</div>
<div class="t" style="left:743.82px;width:200px;text-align:center;top:601.50px;font-size:10.0px;color:#6b6b6b;">12:00 PM</div>
<div class="t" style="left:873.04px;width:200px;text-align:center;top:589.80px;font-size:10.0px;color:#6b6b6b;">Jul 24,</div>
<div class="t" style="left:873.04px;width:200px;text-align:center;top:601.50px;font-size:10.0px;color:#6b6b6b;">12:00 AM</div>
<div class="t" style="left:1002.26px;width:200px;text-align:center;top:589.80px;font-size:10.0px;color:#6b6b6b;">Jul 24,</div>
<div class="t" style="left:1002.26px;width:200px;text-align:center;top:601.50px;font-size:10.0px;color:#6b6b6b;">12:00 PM</div>
<div class="t" style="left:1131.48px;width:200px;text-align:center;top:589.80px;font-size:10.0px;color:#6b6b6b;">Jul 25,</div>
<div class="t" style="left:1131.48px;width:200px;text-align:center;top:601.50px;font-size:10.0px;color:#6b6b6b;">12:00 AM</div>
<div class="t" style="left:1260.70px;width:200px;text-align:center;top:589.80px;font-size:10.0px;color:#6b6b6b;">Jul 25,</div>
<div class="t" style="left:1260.70px;width:200px;text-align:center;top:601.50px;font-size:10.0px;color:#6b6b6b;">12:00 PM</div>
<div class="t" style="left:638.00px;top:658.20px;font-size:14px;color:#3b3f44;">Time consumption by caller</div>
<svg class="r" style="left:607px;top:680px" width="796" height="180" viewBox="607 680 796 180">
<rect x="697.44" y="684.5" width="1" height="162" fill="#ededed"/>
<rect x="772.38" y="684.5" width="1" height="162" fill="#ededed"/>
<rect x="847.32" y="684.5" width="1" height="162" fill="#ededed"/>
<rect x="922.26" y="684.5" width="1" height="162" fill="#ededed"/>
<rect x="997.20" y="684.5" width="1" height="162" fill="#ededed"/>
<rect x="1072.14" y="684.5" width="1" height="162" fill="#ededed"/>
<rect x="1147.08" y="684.5" width="1" height="162" fill="#ededed"/>
<rect x="1222.02" y="684.5" width="1" height="162" fill="#ededed"/>
<rect x="1296.96" y="684.5" width="1" height="162" fill="#ededed"/>
<rect x="1371.90" y="684.5" width="1" height="162" fill="#ededed"/>
<rect x="623" y="684.5" width="1" height="164" fill="#9c9c9c"/>
<rect x="623" y="727" width="556.00" height="79" fill="#1f4faa"/>
<rect x="1179" y="727" width="71.00" height="79" fill="#9860a4"/>
<rect x="1250" y="727" width="54.70" height="79" fill="#9bca69"/>
<rect x="1304.7" y="727" width="23.40" height="79" fill="#ef6b53"/>
<rect x="1328.1" y="727" width="12.70" height="79" fill="#f1c84c"/>
<rect x="1340.8" y="727" width="31.60" height="79" fill="#00b5da"/>
<ellipse cx="631.3" cy="835.8" rx="5.2" ry="4.3" fill="none" stroke="#9c9c9c" stroke-width="2.3"/>
<circle cx="631.3" cy="835.8" r="2.4" fill="none" stroke="#d2d2d2" stroke-width="1.1"/>
</svg>
<div class="t" style="left:597.94px;width:200px;text-align:center;top:844.19px;font-size:9.9px;color:#6b6b6b;-webkit-text-stroke:0.15px #6b6b6b;transform:scaleX(0.92);transform-origin:50% 0;">10 %</div>
<div class="t" style="left:672.88px;width:200px;text-align:center;top:844.19px;font-size:9.9px;color:#6b6b6b;-webkit-text-stroke:0.15px #6b6b6b;transform:scaleX(0.92);transform-origin:50% 0;">20 %</div>
<div class="t" style="left:747.82px;width:200px;text-align:center;top:844.19px;font-size:9.9px;color:#6b6b6b;-webkit-text-stroke:0.15px #6b6b6b;transform:scaleX(0.92);transform-origin:50% 0;">30 %</div>
<div class="t" style="left:822.76px;width:200px;text-align:center;top:844.19px;font-size:9.9px;color:#6b6b6b;-webkit-text-stroke:0.15px #6b6b6b;transform:scaleX(0.92);transform-origin:50% 0;">40 %</div>
<div class="t" style="left:897.70px;width:200px;text-align:center;top:844.19px;font-size:9.9px;color:#6b6b6b;-webkit-text-stroke:0.15px #6b6b6b;transform:scaleX(0.92);transform-origin:50% 0;">50 %</div>
<div class="t" style="left:972.64px;width:200px;text-align:center;top:844.19px;font-size:9.9px;color:#6b6b6b;-webkit-text-stroke:0.15px #6b6b6b;transform:scaleX(0.92);transform-origin:50% 0;">60 %</div>
<div class="t" style="left:1047.58px;width:200px;text-align:center;top:844.19px;font-size:9.9px;color:#6b6b6b;-webkit-text-stroke:0.15px #6b6b6b;transform:scaleX(0.92);transform-origin:50% 0;">70 %</div>
<div class="t" style="left:1122.52px;width:200px;text-align:center;top:844.19px;font-size:9.9px;color:#6b6b6b;-webkit-text-stroke:0.15px #6b6b6b;transform:scaleX(0.92);transform-origin:50% 0;">80 %</div>
<div class="t" style="left:1197.46px;width:200px;text-align:center;top:844.19px;font-size:9.9px;color:#6b6b6b;-webkit-text-stroke:0.15px #6b6b6b;transform:scaleX(0.92);transform-origin:50% 0;">90 %</div>
<div class="t" style="left:1272.40px;width:200px;text-align:center;top:844.19px;font-size:9.9px;color:#6b6b6b;-webkit-text-stroke:0.15px #6b6b6b;transform:scaleX(0.92);transform-origin:50% 0;">100 %</div>
<div class="r" style="left:623px;top:867px;width:120px;height:12px;background:#2f5eb8;border:1px solid #2657b0"></div>
<div class="t" style="left:630.50px;top:869.01px;font-size:9.4px;color:#eef2fa;width:108px;white-space:nowrap;-webkit-text-stroke:0.25px #eef2fa;">AutoBill::Worker/perform</div>
<div class="r" style="left:754px;top:867px;width:150px;height:12px;background:#a672b4;border:1px solid #9c66ab"></div>
<div class="t" style="left:761.50px;top:869.01px;font-size:9.4px;color:#f3eaf6;width:138px;white-space:nowrap;-webkit-text-stroke:0.25px #f3eaf6;">Boxes::RecipesController#update</div>
<div class="r" style="left:916px;top:867px;width:259px;height:12px;background:#9fcf78;border:1px solid #95c86c"></div>
<div class="t" style="left:923.50px;top:869.01px;font-size:9.4px;color:#3b4a30;width:247px;white-space:nowrap;-webkit-text-stroke:0.25px #3b4a30;">Api::Internal::SubscriptionsController#activate_subscription</div>
<div class="r" style="left:623px;top:888px;width:279px;height:13px;background:#f07560;border:1px solid #ea6a55"></div>
<div class="t" style="left:630.50px;top:890.01px;font-size:9.4px;color:#4a3a36;width:267px;white-space:nowrap;-webkit-text-stroke:0.25px #4a3a36;">Api::Internal::SubscriptionsController#update_taste_preferences</div>
<div class="r" style="left:913px;top:888px;width:101px;height:13px;background:#f2cb5c;border:1px solid #eac254"></div>
<div class="t" style="left:920.50px;top:890.01px;font-size:9.4px;color:#4d4434;width:89px;white-space:nowrap;-webkit-text-stroke:0.25px #4d4434;">BoxesController#skip</div>
<div class="r" style="left:1025px;top:888px;width:37px;height:13px;background:#1cb8dc;border:1px solid #12b0d6"></div>
<div class="t" style="left:1032.50px;top:890.01px;font-size:9.4px;color:#1d4454;width:25px;white-space:nowrap;-webkit-text-stroke:0.25px #1d4454;">Other</div>
<div class="r" style="left:1146px;top:944px;width:237px;height:30px;border:1px solid #c9c9c9;background:#fff"></div>
<div class="t" style="left:1153.40px;top:951.84px;font-size:9.6px;color:#666;">Filter slow queries</div>
</body></html>
